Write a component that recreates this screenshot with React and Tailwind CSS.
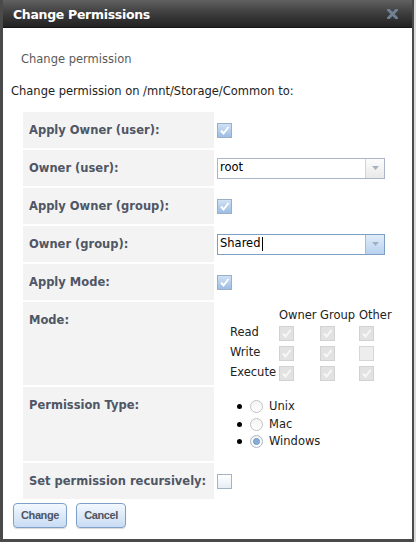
import React from 'react'

const font = "font-['DejaVu_Sans',Verdana,sans-serif]"

const Check = ({ checked, disabled }) => {
  let box = 'border-[#9aafc6] bg-gradient-to-b from-[#d0e2f5] to-[#9dbde2]'
  let mark = '#ffffff'
  if (disabled) {
    box = checked ? 'border-[#d2d2d2] bg-[#e2e2e2]' : 'border-[#d6d6d6] bg-[#ededed]'
    mark = '#f7f7f7'
  } else if (!checked) {
    box = 'border-[#a3b2c5] bg-gradient-to-b from-[#ffffff] to-[#e6edf5]'
  }
  return (
    <span className={`w-[15px] h-[15px] border flex items-center justify-center shrink-0 ${box}`}>
      {checked && (
        <svg width="13" height="13" viewBox="0 0 13 13">
          <path d="M3 6.5 L5.5 9.5 L10.5 3" fill="none" stroke={mark} strokeWidth="2" />
        </svg>
      )}
    </span>
  )
}

const Select = ({ value, focused }) => (
  <div className={`w-[168px] h-[21px] border flex bg-white ${focused ? 'border-[#7d9fc2]' : 'border-[#aab6c8]'}`}>
    <div className="flex-1 flex items-center pl-[2px] text-[11.5px] text-black">
      {value}
      {focused && <span className="w-px h-[14px] bg-black ml-px" />}
    </div>
    <div className={`w-[19px] flex items-center justify-center border-l ${focused ? 'border-[#9fbcdc] bg-gradient-to-b from-[#e1ecf8] to-[#b7d1ef]' : 'border-[#cfd5de] bg-gradient-to-b from-[#fcfcfc] to-[#e9e9e9]'}`}>
      <svg width="7" height="4" viewBox="0 0 7 4">
        <path d="M0 0 H7 L3.5 4 Z" fill={focused ? '#9fb0c6' : '#a9b1bc'} />
      </svg>
    </div>
  </div>
)

const Radio = ({ selected }) => (
  <span className={`w-[13px] h-[13px] rounded-full border flex items-center justify-center ${selected ? 'border-[#a9b5c4]' : 'border-[#c3c3c3]'} bg-gradient-to-b from-[#f4f4f4] to-[#ffffff]`}>
    {selected && <span className="w-[7px] h-[7px] rounded-full bg-[#89aed6] border border-[#7097c2]" />}
  </span>
)

const Row = ({ label, h = 'h-[36px]', children, top }) => (
  <div className={`flex gap-[2px] ${h}`}>
    <div className="w-[191px] bg-[#f3f3f3] pl-[6px] pt-[11px] text-[11.5px] leading-[14px] font-bold text-[#4f5665] whitespace-nowrap">
      {label}
    </div>
    <div className={`flex-1 flex pl-px ${top ? 'items-start' : 'items-center'}`}>{children}</div>
  </div>
)

const modes = [
  { name: 'Read', v: [true, true, true] },
  { name: 'Write', v: [true, true, false] },
  { name: 'Execute', v: [true, true, true] }
]

const types = [
  { name: 'Unix', sel: false },
  { name: 'Mac', sel: false },
  { name: 'Windows', sel: true }
]

export default function App() {
  return (
    <div className={`w-[416px] h-[542px] bg-[#dcdcdc] overflow-hidden ${font}`}>
      <div className="w-[414px] h-[542px] flex flex-col bg-white border-l-[3px] border-r-[2px] border-b-[3px] border-[#4a4a4a]">
        {/* title bar */}
        <div className="h-[28px] shrink-0 flex items-center justify-between pl-[10px] pr-[14px] bg-gradient-to-b from-[#616161] via-[#3d3d3d] to-[#222] border-b border-[#161616]">
          <span className="pt-[3px] text-[12.5px] font-bold text-white tracking-[-0.3px]">Change Permissions</span>
          <svg width="11" height="10" viewBox="0 0 11 10">
            <path d="M1.5 1 L9.5 9 M9.5 1 L1.5 9" stroke="#6f8193" strokeWidth="3" strokeLinecap="square" />
          </svg>
        </div>

        <div className="pl-[18px] mt-[24px] text-[11.5px] leading-[14px] text-[#5a5a5a]">Change permission</div>
        <div className="pl-[8px] mt-[18px] text-[11.5px] leading-[14px] text-[#222]">
          Change permission on /mnt/Storage/Common to:
        </div>

        {/* form */}
        <div className="ml-[20px] mt-[14px] flex flex-col gap-[2px]">
          <Row label="Apply Owner (user):"><Check checked /></Row>
          <Row label="Owner (user):"><Select value="root" /></Row>
          <Row label="Apply Owner (group):"><Check checked /></Row>
          <Row label="Owner (group):"><Select value="Shared" focused /></Row>
          <Row label="Apply Mode:"><Check checked /></Row>
          <Row label="Mode:" h="h-[83px]" top>
            <div className="ml-[13px] pt-[5px] grid grid-cols-[49px_41px_39px_40px] text-[11.5px] text-[#222]">
              <span />
              <span className="h-[16px] leading-[16px]">Owner</span>
              <span className="h-[16px] leading-[16px]">Group</span>
              <span className="h-[16px] leading-[16px]">Other</span>
              {modes.map((m) => (
                <React.Fragment key={m.name}>
                  <span className="h-[20px] flex items-center">{m.name}</span>
                  {m.v.map((c, i) => (
                    <span key={i} className="h-[20px] flex items-center">
                      <Check checked={c} disabled />
                    </span>
                  ))}
                </React.Fragment>
              ))}
            </div>
          </Row>
          <Row label="Permission Type:" h="h-[74px]" top>
            <ul className="pt-[11px] pl-[20px] text-[11.5px] text-[#222]">
              {types.map((t) => (
                <li key={t.name} className="h-[17.5px] flex items-center">
                  <span className="w-[5px] h-[5px] rounded-full bg-black mr-[8px]" />
                  <Radio selected={t.sel} />
                  <span className="ml-[6px]">{t.name}</span>
                </li>
              ))}
            </ul>
          </Row>
          <Row label="Set permission recursively:"><Check /></Row>
        </div>

        {/* buttons */}
        <div className="ml-[10px] mt-[4px] flex gap-[9px]">
          {['Change', 'Cancel'].map((b) => (
            <button
              key={b}
              className={`h-[25px] ${b === 'Change' ? 'w-[54px]' : 'w-[50px]'} rounded-[4px] border border-[#7fa0c6] bg-gradient-to-b from-[#f3f8fe] to-[#c8dcf3] shadow-[0_1px_1px_rgba(0,0,0,0.15)] font-['Liberation_Sans',Arial,sans-serif] text-[11px] font-bold tracking-[-0.4px] text-[#4e5461]`}
            >
              {b}
            </button>
          ))}
        </div>
      </div>
    </div>
  )
}
